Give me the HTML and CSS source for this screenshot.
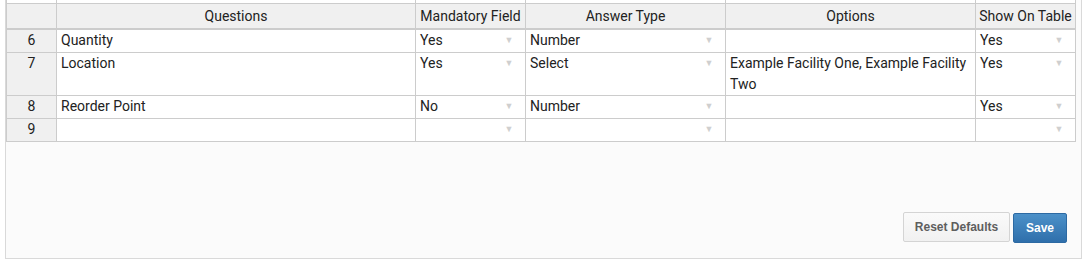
FILE: index.html
```html
<!DOCTYPE html>
<html>
<head>
<meta charset="utf-8">
<link rel="stylesheet" href="styles.css">
</head>
<body>
<div class="panel">
  <div class="grid-wrap">
    <table class="grid">
      <colgroup>
        <col class="c-row"><col class="c-q"><col class="c-m"><col class="c-a"><col class="c-o"><col class="c-s">
      </colgroup>
      <thead>
        <tr class="stub"><td></td><td></td><td></td><td></td><td></td><td></td></tr>
        <tr class="head">
          <th></th>
          <th>Questions</th>
          <th>Mandatory Field</th>
          <th>Answer Type</th>
          <th>Options</th>
          <th>Show On Table</th>
        </tr>
      </thead>
      <tbody>
        <tr>
          <th>6</th>
          <td>Quantity</td>
          <td><span class="arrow">▼</span>Yes</td>
          <td><span class="arrow">▼</span>Number</td>
          <td></td>
          <td><span class="arrow">▼</span>Yes</td>
        </tr>
        <tr>
          <th>7</th>
          <td>Location</td>
          <td><span class="arrow">▼</span>Yes</td>
          <td><span class="arrow">▼</span>Select</td>
          <td>Example Facility One, Example Facility Two</td>
          <td><span class="arrow">▼</span>Yes</td>
        </tr>
        <tr>
          <th>8</th>
          <td>Reorder Point</td>
          <td><span class="arrow">▼</span>No</td>
          <td><span class="arrow">▼</span>Number</td>
          <td></td>
          <td><span class="arrow">▼</span>Yes</td>
        </tr>
        <tr>
          <th>9</th>
          <td></td>
          <td><span class="arrow">▼</span></td>
          <td><span class="arrow">▼</span></td>
          <td></td>
          <td><span class="arrow">▼</span></td>
        </tr>
      </tbody>
    </table>
  </div>
  <div class="actions">
    <button class="btn btn-default">Reset Defaults</button>
    <button class="btn btn-primary">Save</button>
  </div>
</div>
</body>
</html>
```
FILE: styles.css
```css
html, body {
  margin: 0;
  padding: 0;
  background: #ffffff;
}
body {
  font-family: Roboto, "Liberation Sans", Arial, sans-serif;
  font-size: 14px;
  color: #222;
}
.panel {
  margin: 0 0 0 5px;
  width: 1077px;
  height: 259px;
  box-sizing: border-box;
  border: 1px solid #d9d9d9;
  border-top: none;
  background: #fbfbfb;
  display: flex;
  flex-direction: column;
}
.grid {
  border-collapse: collapse;
  table-layout: fixed;
  width: 1069px;
  background: #fff;
}
.c-row { width: 50px; }
.c-q { width: 359px; }
.c-m { width: 110px; }
.c-a { width: 200px; }
.c-o { width: 250px; }
.c-s { width: 100px; }
.grid td, .grid th {
  border: 1px solid #ccc;
  padding: 0 4px;
  height: 23px;
  line-height: 21px;
  vertical-align: top;
  text-align: left;
  font-weight: normal;
  white-space: normal;
  overflow: hidden;
  box-sizing: border-box;
}
.grid tr.stub td {
  height: 3px;
  line-height: 2px;
  padding: 0;
  border-top: none;
  border-bottom: 1px solid #ccc;
}
.grid tr.head th {
  background: #f0f0f0;
  text-align: center;
  height: 26px;
  line-height: 24px;
  vertical-align: middle;
  padding: 0 2px;
  border-bottom: 2px solid #ccc;
  color: #222;
  white-space: nowrap;
}
.grid tbody th {
  background: #f0f0f0;
  text-align: center;
  color: #222;
}
.arrow {
  float: right;
  width: 16px;
  text-align: center;
  font-size: 9px;
  color: #cfcfcf;
  margin-right: 4px;
}
.actions {
  margin-top: auto;
  display: flex;
  justify-content: flex-end;
  align-items: flex-start;
  gap: 3px;
  padding: 0 14px 15px 0;
}
.btn {
  font-family: "Liberation Sans", Arial, sans-serif;
  font-weight: bold;
  font-size: 12px;
  border-radius: 2px;
  cursor: pointer;
  height: 30px;
  box-sizing: border-box;
  padding: 0;
  flex: none;
}
.btn-default {
  width: 107px;
  background: linear-gradient(#fafafa, #f1f1f1);
  border: 1px solid #d4d4d4;
  color: #5e5e5e;
}
.btn-primary {
  width: 54px;
  margin-top: 1px;
  background: linear-gradient(#4c91c9, #2f6fab);
  border: 1px solid #2d6aa3;
  color: #fff;
}
```
